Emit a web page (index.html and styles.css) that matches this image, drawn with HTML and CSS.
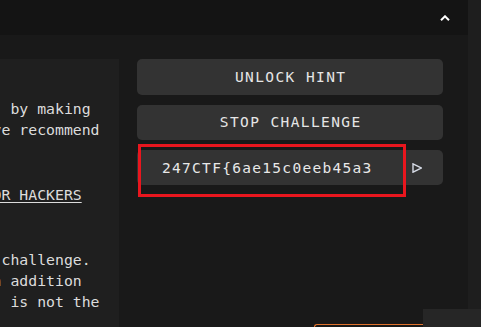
FILE: index.html
```html
<!DOCTYPE html>
<html lang="en">
<head>
<meta charset="utf-8">
<title>Challenge</title>
<link rel="stylesheet" href="styles.css">
</head>
<body>
<div class="page">
  <div class="main">
    <header class="topbar">
      <svg class="chev" width="10" height="6" viewBox="0 0 10 6"><polyline points="1,5.2 5,1.3 9,5.2" fill="none" stroke="#ffffff" stroke-width="2" stroke-linejoin="miter"/></svg>
    </header>
    <div class="content">
      <aside class="desc">
        <div class="desc-inner">
          <p class="para"><span class="ln">  by making</span><span class="ln">ve recommend</span></p>
          <p class="para"><a class="ln link">OR HACKERS</a></p>
          <p class="para"><span class="ln"> challenge.</span><span class="ln">n addition</span><span class="ln">  is not the</span></p>
        </div>
      </aside>
      <section class="actions">
        <button class="btn">UNLOCK HINT</button>
        <button class="btn">STOP CHALLENGE</button>
        <div class="flag-row">
          <div class="flag-input">247CTF{6ae15c0eeb45a3</div>
          <button class="submit"><svg width="10" height="10" viewBox="0 0 10 10"><polygon points="1,0.8 9.2,5 1,9.2" fill="none" stroke="#d6dbe6" stroke-width="1.4" stroke-linejoin="miter"/></svg></button>
          <div class="highlight"></div>
        </div>
        <div class="orange-tab"></div>
      </section>
    </div>
  </div>
  <div class="scrolltrack"></div>
  <div class="corner-widget"></div>
</div>
</body>
</html>
```

FILE: styles.css
```css
* { box-sizing: border-box; }
html, body {
  margin: 0;
  padding: 0;
  height: 327px;
  overflow: hidden;
  background: #191919;
}
.page {
  position: relative;
  display: flex;
  height: 327px;
  width: 481px;
}
.main {
  flex: 1;
  display: flex;
  flex-direction: column;
  min-width: 0;
}
.topbar {
  height: 35px;
  background: #141414;
  display: flex;
  align-items: center;
  justify-content: flex-end;
  padding-right: 18px;
  flex: none;
}
.chev { display: block; margin-top: 1px; }
.content {
  flex: 1;
  display: flex;
  padding-top: 24px;
  min-height: 0;
}
.desc {
  width: 119px;
  flex: none;
  background: #1f1f1f;
  overflow: hidden;
}
.desc-inner {
  margin-left: -7.4px;
  padding-top: 39px;
  font-family: "DejaVu Sans Mono", monospace;
  font-size: 14.8px;
  line-height: 21px;
  color: #dcdcdc;
}
.para { margin: 0 0 44px 0; }
.ln { display: block; white-space: pre; }
.link { color: #dcdcdc; text-decoration: underline; text-underline-offset: 2px; }
.actions {
  width: 306px;
  margin-left: 18px;
  display: flex;
  flex-direction: column;
  gap: 10px;
  flex: none;
}
.btn {
  height: 35.5px;
  border: none;
  border-radius: 5px;
  background: #333333;
  color: #e6e6e6;
  font-family: "DejaVu Sans Mono", monospace;
  font-size: 14.5px;
  letter-spacing: 1.4px;
  padding: 0 0 0 1.4px;
  display: flex;
  align-items: center;
  justify-content: center;
  flex: none;
}
.flag-row {
  position: relative;
  height: 35px;
  background: #333333;
  border-radius: 5px;
  display: flex;
  align-items: center;
  flex: none;
}
.flag-input {
  flex: 1;
  min-width: 0;
  padding-left: 25px;
  font-family: "DejaVu Sans Mono", monospace;
  font-size: 14.5px;
  letter-spacing: 1.3px;
  color: #e8e8e8;
  white-space: nowrap;
  overflow: hidden;
}
.submit {
  width: 52px;
  height: 35px;
  flex: none;
  border: none;
  background: transparent;
  padding: 0 0 0 21px;
  display: flex;
  align-items: center;
}
.submit svg { display: block; }
.highlight {
  position: absolute;
  left: 1px;
  top: -6px;
  width: 268px;
  height: 53px;
  border: 3px solid #e9161e;
  pointer-events: none;
}
.orange-tab {
  margin-top: 129px;
  margin-left: 177px;
  height: 12px;
  flex: none;
  border-top: 1.5px solid #e0722c;
  border-left: 1.5px solid #e0722c;
  border-top-left-radius: 3px;
}
.scrolltrack {
  width: 13px;
  flex: none;
  background: #1e1e1e;
}
.corner-widget {
  position: absolute;
  right: 0;
  bottom: 0;
  width: 58px;
  height: 18px;
  background: #262626;
}
```
